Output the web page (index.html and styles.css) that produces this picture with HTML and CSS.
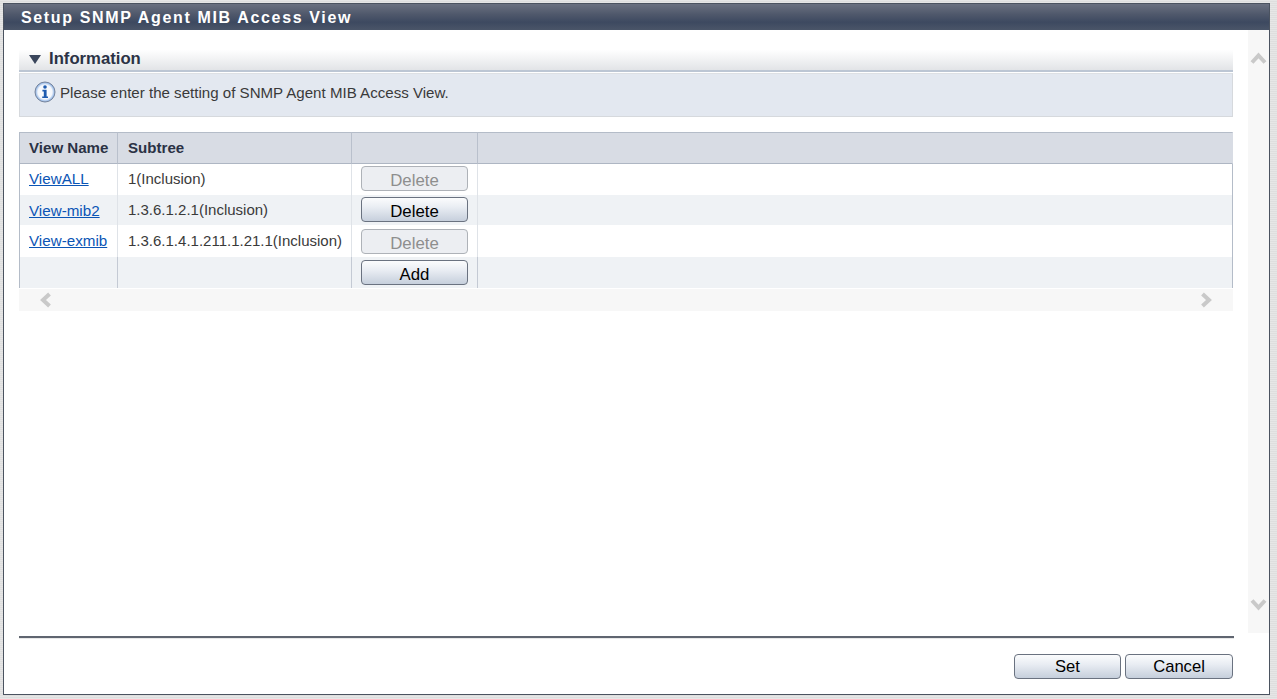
FILE: index.html
```html
<!DOCTYPE html>
<html lang="en">
<head>
<meta charset="utf-8">
<title>Setup SNMP Agent MIB Access View</title>
<link rel="stylesheet" href="styles.css">
</head>
<body>
<div class="window">
  <div class="titlebar">Setup SNMP Agent MIB Access View</div>
  <div class="main">
    <div class="content">
      <div class="section-head">
        <svg class="tri" width="12" height="9" viewBox="0 0 12 9"><path d="M0 0H12L6 9Z" fill="#3a465c"/></svg>
        <span>Information</span>
      </div>
      <div class="info">
        <svg class="info-icon" width="22" height="22" viewBox="0 0 22 22">
          <defs><radialGradient id="ig" cx="50%" cy="50%" r="52%"><stop offset="0" stop-color="#ffffff"/><stop offset="0.68" stop-color="#f4f7fc"/><stop offset="0.88" stop-color="#9dbde8"/><stop offset="1" stop-color="#6f8fc0"/></radialGradient></defs>
          <circle cx="11" cy="11" r="10" fill="url(#ig)" stroke="#78869e" stroke-width="1"/>
          <circle cx="11" cy="6" r="1.8" fill="#1f5cb0"/>
          <path d="M8.4 8.8H12.6V15.4H14V17H8.2V15.4H9.8V10.4H8.4Z" fill="#1f5cb0"/>
        </svg>
        <span>Please enter the setting of SNMP Agent MIB Access View.</span>
      </div>
      <div class="grid-wrap">
        <table class="grid">
          <colgroup><col class="c1"><col class="c2"><col class="c3"><col></colgroup>
          <thead>
            <tr><th>View Name</th><th>Subtree</th><th></th><th></th></tr>
          </thead>
          <tbody>
            <tr class="r1"><td><a href="#">ViewALL</a></td><td>1(Inclusion)</td><td class="act"><button class="btn" disabled>Delete</button></td><td></td></tr>
            <tr class="r2"><td><a href="#">View-mib2</a></td><td>1.3.6.1.2.1(Inclusion)</td><td class="act"><button class="btn">Delete</button></td><td></td></tr>
            <tr class="r3"><td><a href="#">View-exmib</a></td><td>1.3.6.1.4.1.211.1.21.1(Inclusion)</td><td class="act"><button class="btn" disabled>Delete</button></td><td></td></tr>
            <tr class="r4"><td></td><td></td><td class="act"><button class="btn">Add</button></td><td></td></tr>
          </tbody>
        </table>
        <div class="hscroll">
          <svg width="14" height="16" viewBox="0 0 14 16"><path d="M10.5 2L4 8L10.5 14" fill="none" stroke="#c9c9c9" stroke-width="4"/></svg>
          <svg width="14" height="16" viewBox="0 0 14 16"><path d="M3.5 2L10 8L3.5 14" fill="none" stroke="#c9c9c9" stroke-width="4"/></svg>
        </div>
      </div>
    </div>
    <div class="vscroll">
      <svg width="17" height="13" viewBox="0 0 17 13"><path d="M2 11.5L8.5 4.5L15 11.5" fill="none" stroke="#c9c9c9" stroke-width="4"/></svg>
      <svg width="17" height="13" viewBox="0 0 17 13"><path d="M2 1.5L8.5 8.5L15 1.5" fill="none" stroke="#c9c9c9" stroke-width="4"/></svg>
    </div>
  </div>
  <div class="footer">
    <button class="btn foot">Set</button>
    <button class="btn foot wide">Cancel</button>
  </div>
</div>
</body>
</html>
```

FILE: styles.css
```css
* { box-sizing: border-box; }
html, body { margin: 0; height: 100%; }
body {
  height: 699px;
  overflow: hidden;
  padding: 3px 7px 4px 3px;
  background: repeating-linear-gradient(0deg, #e6e6e6 0, #e6e6e6 1px, #dedede 1px, #dedede 2px);
  font-family: "Liberation Sans", Arial, sans-serif;
  color: #3a3a3a;
}
.window {
  height: 692px;
  border: 1px solid #4b5360;
  background: #fff;
  display: flex;
  flex-direction: column;
}
.titlebar {
  height: 26px;
  flex: none;
  padding-left: 17px;
  line-height: 27px;
  font-size: 16px;
  font-weight: bold;
  letter-spacing: 1.65px;
  color: #fff;
  background: linear-gradient(#6a7080 0, #4f586b 40%, #3d4960 70%, #4a5568 100%);
}
.main {
  height: 603px;
  flex: none;
  display: flex;
}
.content {
  flex: 1;
  padding: 16px 15px 0 15px;
  min-width: 0;
}
.section-head {
  height: 26px;
  display: flex;
  align-items: center;
  gap: 8px;
  padding: 2px 0 0 10px;
  font-size: 16.7px;
  font-weight: bold;
  color: #2b3245;
  background: linear-gradient(#fff 0, #fff 15%, #e2e4e7 100%);
  border-bottom: 2px solid #bcc6d4;
}
.info {
  margin-top: 1px;
  height: 44px;
  display: flex;
  align-items: flex-start;
  gap: 4px;
  padding: 7px 0 0 14px;
  font-size: 15.1px;
  line-height: 24px;
  background: #e3e8f0;
  border: 1px solid #d6d9dd;
  border-top-color: #dde0e4;
}
.grid-wrap { margin-top: 15px; }
.grid {
  width: 100%;
  table-layout: fixed;
  border-collapse: separate;
  border-spacing: 0;
  font-size: 15px;
}
.c1 { width: 99px; }
.c2 { width: 234px; }
.c3 { width: 126px; }
.grid th {
  height: 32px;
  padding: 0 0 2px 10px;
  text-align: left;
  font-size: 15.1px;
  font-weight: bold;
  color: #2b3245;
  background: #d8dce4;
  border-top: 1px solid #b4bcc8;
  border-bottom: 1px solid #aeb6c3;
  border-right: 1px solid #b9c0cc;
}
.grid th:first-child { border-left: 1px solid #b4bcc8; padding-left: 9px; }
.grid th:last-child { border-right: 1px solid #d8dce4; }
.grid td {
  padding: 0 0 2px 10px;
  border-right: 1px solid #dfe3e8;
  white-space: nowrap;
}
.grid td:first-child { border-left: 1px solid #b4bcc8; padding-left: 9px; }
.grid td:last-child { border-right: 1px solid #b4bcc8; }
.r1 td { height: 31px; background: #fff; }
.r2 td { height: 30px; background: #eff2f5; }
.r2 td:first-child { padding-bottom: 0; }
.r3 td { height: 32px; background: #fff; }
.r4 td { height: 31px; background: #eff2f5; border-right-color: #c4cad4; }
.grid a { color: #0b55b5; font-size: 15.2px; }
.grid td.act { padding: 0 0 0 9px; vertical-align: top; }
.r1 td.act { padding-top: 2px; }
.r2 td.act { padding-top: 2px; }
.r3 td.act { padding-top: 4px; }
.r4 td.act { padding-top: 3px; }
.btn {
  display: block;
  width: 107px;
  height: 25px;
  padding: 3px 0 0;
  font-family: inherit;
  font-size: 16.8px;
  line-height: 21px;
  color: #000;
  border: 1px solid #6a7280;
  border-radius: 4px;
  background: linear-gradient(#fbfcfd 0, #e9edf3 40%, #c6cfdc 100%);
}
.btn:disabled {
  color: #8e8e8e;
  border-color: #aeb2b8;
  background: #eceef2;
}
.hscroll {
  height: 22px;
  margin-top: 1px;
  display: flex;
  align-items: center;
  justify-content: space-between;
  padding: 0 20px;
  background: #f7f7f7;
}
.vscroll {
  flex: none;
  width: 21px;
  background: #f7f7f7;
  display: flex;
  flex-direction: column;
  justify-content: space-between;
  align-items: center;
  padding: 21px 0 21px;
}
.footer {
  margin: 3px 35px 0 15px;
  padding-top: 16px;
  border-top: 2px solid #5f6570;
  box-shadow: inset 0 1px 0 #e8e8e8;
  display: flex;
  justify-content: flex-end;
  gap: 4px;
}
.foot { width: 107px; height: 25px; font-size: 16.6px; padding-top: 0; }
.wide { width: 108px; margin-right: 1px; }
```
